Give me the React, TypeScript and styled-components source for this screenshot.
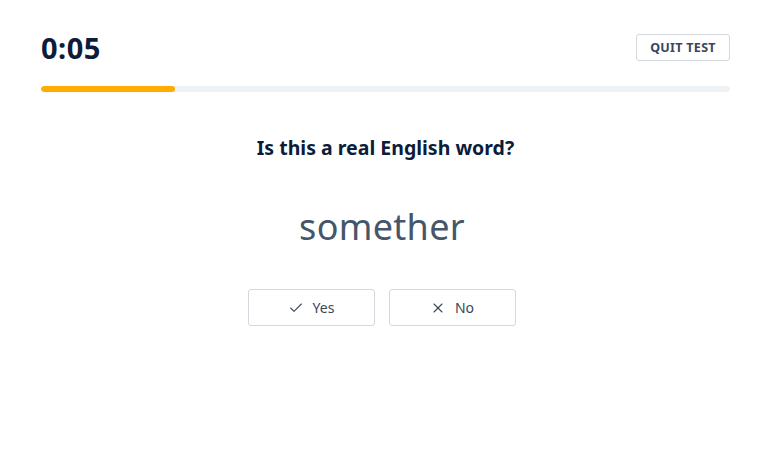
import React from "react";
import styled, { createGlobalStyle } from "styled-components";
import { Check, X } from "lucide-react";

const GlobalStyle = createGlobalStyle`
    body {
        margin: 0;
        background: #ffffff;
        font-family: "Noto Sans", "DejaVu Sans", sans-serif;
    }
`;

const App: React.FC = () => {
    const progress = 19.5;

    return (
        <>
            <GlobalStyle />
            <Page>
                <TopBar>
                    <Timer>0:05</Timer>
                    <QuitButton>QUIT TEST</QuitButton>
                </TopBar>
                <Track>
                    <Fill style={{ width: `${progress}%` }} />
                </Track>
                <Question>Is this a real English word?</Question>
                <Word>somether</Word>
                <Answers>
                    <AnswerButton>
                        <Check size={16} strokeWidth={1.6} />
                        Yes
                    </AnswerButton>
                    <AnswerButton>
                        <X size={16} strokeWidth={1.6} />
                        No
                    </AnswerButton>
                </Answers>
            </Page>
        </>
    );
};

const Page = styled.div`
    padding: 27px 38px 0 41px;
    display: flex;
    flex-direction: column;
`;

const TopBar = styled.div`
    display: flex;
    justify-content: space-between;
    align-items: center;
    height: 40px;
`;

const Timer = styled.h1`
    margin: 0;
    font-size: 29px;
    font-weight: 700;
    color: #0c1c3a;
    letter-spacing: 0.5px;
`;

const QuitButton = styled.button`
    font-family: inherit;
    height: 27px;
    width: 94px;
    background: #fff;
    border: 1px solid #d3d8de;
    border-radius: 3px;
    font-size: 12.5px;
    font-weight: 700;
    color: #3a4656;
    letter-spacing: 0.3px;
    padding: 0;
`;

const Track = styled.div`
    margin-top: 19px;
    height: 6px;
    border-radius: 3px;
    background: #eff2f5;
    overflow: hidden;
`;

const Fill = styled.div`
    height: 100%;
    background: #ffab00;
    border-radius: 3px;
`;

const Question = styled.h2`
    margin: 42px 0 0;
    text-align: center;
    font-size: 19.5px;
    font-weight: 700;
    color: #0c1c3a;
`;

const Word = styled.div`
    margin-top: 41px;
    margin-right: 7px;
    text-align: center;
    font-size: 36px;
    color: #46566a;
    letter-spacing: 0.3px;
`;

const Answers = styled.div`
    margin-top: 38px;
    margin-right: 8px;
    display: flex;
    justify-content: center;
    gap: 14px;
`;

const AnswerButton = styled.button`
    font-family: inherit;
    width: 127px;
    height: 37px;
    display: flex;
    align-items: center;
    justify-content: center;
    gap: 9px;
    background: #fff;
    border: 1px solid #d3d8de;
    border-radius: 3px;
    font-size: 14px;
    color: #3a4656;
    padding: 0;

    svg {
        color: #3a4656;
    }
`;

export default App;
